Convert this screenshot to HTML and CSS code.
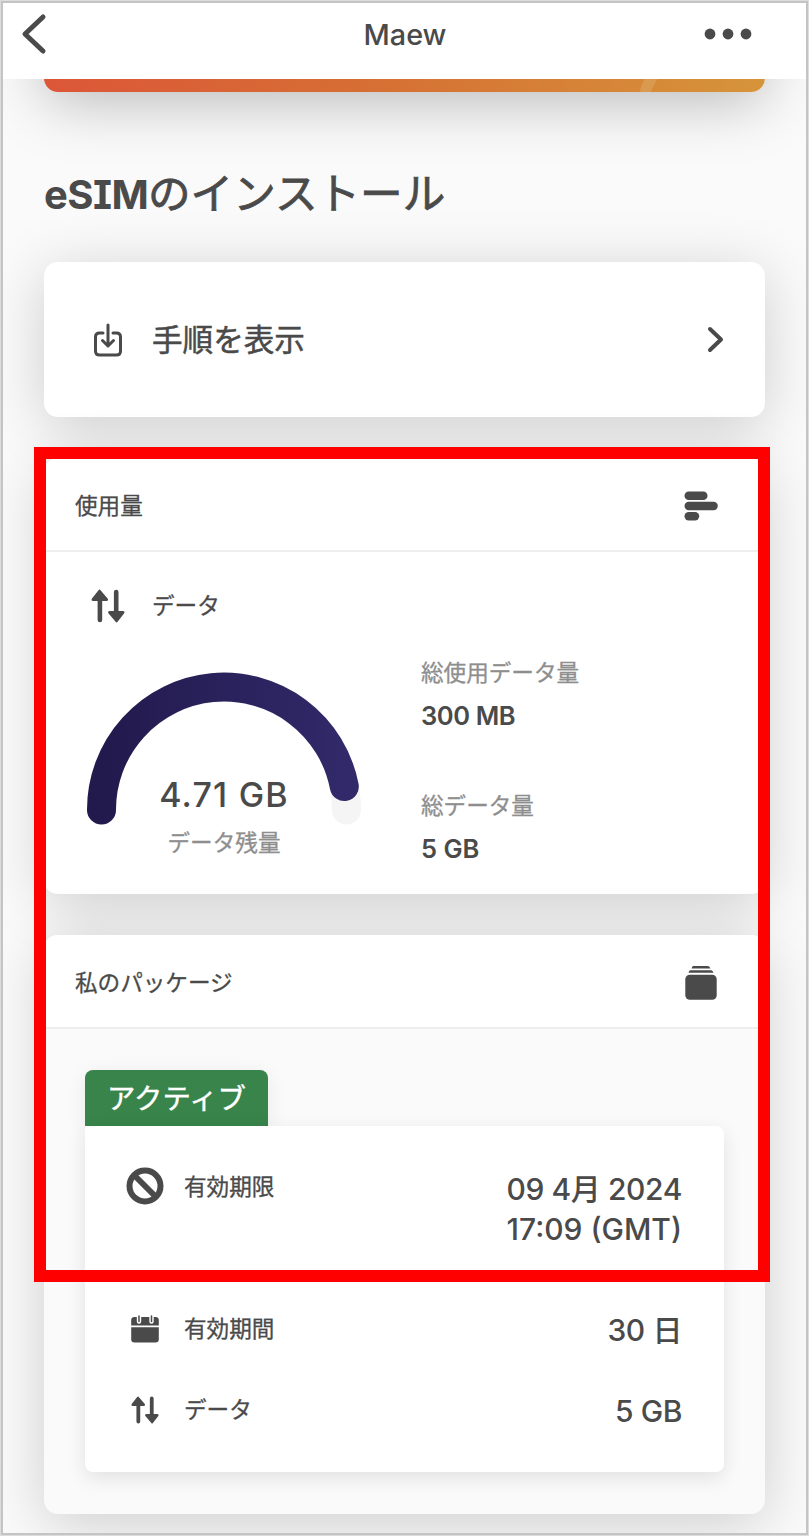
FILE: index.html
```html
<!DOCTYPE html>
<html lang="ja">
<head>
<meta charset="utf-8">
<title>Maew</title>
<link rel="stylesheet" href="styles.css">
</head>
<body>
<svg class="defs" aria-hidden="true">
  <symbol id="transfer" viewBox="0 0 34 34">
    <path class="fill" d="M8.900.5 17 10Q17.600 12 15.600 12H11.200V31a2.300 2.300 0 0 1-4.600 0V12H2Q0 12 .6 10L7.500 1.300Q8.200.4 8.900.5Z"/>
    <path class="fill" d="M25.200 33.500 17.200 24Q16.600 22 18.600 22H22.900V3a2.300 2.300 0 0 1 4.600 0V22h4.500Q34 22 33.400 24L26.600 32.700Q25.900 33.600 25.200 33.500Z"/>
  </symbol>
</svg>
<div class="screen">
  <header class="topbar">
    <svg class="back" width="28" height="44" viewBox="0 0 28 44"><path class="line" stroke-width="5" d="M23 5 5 22 23 39"/></svg>
    <h1 class="topbar-title">Maew</h1>
    <svg class="more" width="48" height="12" viewBox="0 0 48 12"><g class="fill"><circle cx="6" cy="6" r="5.400"/><circle cx="24" cy="6" r="5.400"/><circle cx="42" cy="6" r="5.400"/></g></svg>
  </header>
  <main class="content">
    <div class="sim-card"><svg width="721" height="13" viewBox="0 0 721 13"><path fill="#d99a50" d="M595.500 13Q597 6 600.500 0H613.500Q609 6 607 13Z"/></svg></div>
    <h2 class="heading"><span class="esim">eSIM</span>のインストール</h2>
    <a class="card install">
      <svg width="28" height="34" viewBox="0 0 28 34"><path class="line" stroke-width="3" d="M9 10H5.500Q1.500 10 1.500 14V28Q1.500 32 5.500 32H22.500Q26.500 32 26.500 28V14Q26.500 10 22.500 10H19M14 2V23M8.500 17.500 14 23 19.500 17.500"/></svg>
      <span class="install-label">手順を表示</span>
      <svg class="chevron" width="17" height="27" viewBox="0 0 17 27"><path class="line" stroke-width="4" d="M3 3 14 13.500 3 24"/></svg>
    </a>
    <section class="card usage">
      <div class="card-head">
        <h3 class="label">使用量</h3>
        <svg width="34" height="30" viewBox="0 0 34 30"><g class="fill"><rect x=".5" y=".6" width="23" height="8.500" rx="4.200"/><rect x=".5" y="10.800" width="33.300" height="8.500" rx="4.200"/><rect x=".5" y="21" width="14.700" height="8.500" rx="4.200"/></g></svg>
      </div>
      <div class="usage-title">
        <svg width="34" height="34"><use href="#transfer"/></svg>
        <span class="label">データ</span>
      </div>
      <div class="usage-body">
        <div class="gauge">
          <svg class="arc" width="276" height="153" viewBox="0 0 276 153">
            <defs><linearGradient id="arc-fill" x1="0" y1="0" x2="1" y2="0"><stop offset="0" stop-color="#221a4d"/><stop offset="1" stop-color="#312969"/></linearGradient></defs>
            <g fill="none" stroke-width="29" stroke-linecap="round">
              <path stroke="#f5f5f5" d="M15.500 138A122.500 122.500 0 0 1 260.500 138"/>
              <path stroke="url(#arc-fill)" d="M15.500 138A122.500 122.500 0 0 1 258.300 114.500"/>
            </g>
          </svg>
          <div class="gauge-text">
            <div class="gauge-value">4.71 GB</div>
            <div class="label muted">データ残量</div>
          </div>
        </div>
        <dl class="stats">
          <dt class="label muted">総使用データ量</dt><dd class="stat wide">300 MB</dd>
          <dt class="label muted">総データ量</dt><dd class="stat">5 GB</dd>
        </dl>
      </div>
    </section>
    <section class="card packages">
      <div class="card-head">
        <h3 class="label">私のパッケージ</h3>
        <svg class="stack" width="32" height="34" viewBox="0 0 32 34"><g class="fill"><path d="M8 0H23Q25 .5 25.500 2.500H6.500Q7 .5 8 0ZM5 4.300H26.500Q28 4.800 28.500 6.800H3.500Q4 4.800 5 4.300Z"/><rect x=".3" y="8.700" width="31.400" height="25" rx="4.500"/></g></svg>
      </div>
      <div class="packages-body">
        <div class="badge">アクティブ</div>
        <div class="package">
          <div class="row expiry">
            <svg width="38" height="38" viewBox="0 0 38 38"><path class="line" stroke-width="6" d="M9 9 29 29"/><circle class="line" stroke-width="6" cx="19" cy="19" r="15.500"/></svg>
            <span class="label">有効期限</span>
            <div class="value"><div class="date">09 4月 2024</div><div class="time">17:09 (GMT)</div></div>
          </div>
          <div class="row">
            <svg width="28" height="28" viewBox="0 0 28 28"><path class="fill" d="M3.500 2H24.500Q27.800 2 27.800 5V10.500H.2V5Q.2 2 3.500 2ZM.2 12.300H27.800V24.500Q27.800 27.500 24.500 27.500H3.500Q.2 27.500 .2 24.500Z"/><g fill="none" stroke-linecap="round"><path stroke="#fff" stroke-width="4.400" d="M8 1V6.500M20.500 1V6.500"/><path stroke="#4a4a4a" stroke-width="1.500" d="M8 1V6.500M20.500 1V6.500"/></g></svg>
            <span class="label">有効期間</span>
            <div class="value days">30 日</div>
          </div>
          <div class="row">
            <svg width="28" height="28"><use href="#transfer"/></svg>
            <span class="label">データ</span>
            <div class="value amount">5 GB</div>
          </div>
        </div>
      </div>
    </section>
  </main>
  <div class="highlight"></div>
</div>
</body>
</html>
```
FILE: styles.css
```css
* { box-sizing: border-box; }
body { margin: 0; background: #e2e2e2; color: #4a4a4a; font-family: Inter, "Noto Sans CJK JP", sans-serif; }
h1, h2, h3, dl, dd { margin: 0; font-weight: 500; }
svg { display: block; flex: none; }
.defs { position: absolute; width: 0; height: 0; }
.fill { fill: #4a4a4a; }
.line { fill: none; stroke: #4a4a4a; stroke-linecap: round; stroke-linejoin: round; }

.screen { position: relative; width: 809px; height: 1536px; overflow: hidden; background: #fafafa; border: 1px solid #dcdcdc; }
.screen::after { content: ""; position: absolute; z-index: 3; inset: 0; border: 2px solid #c4c4c4; pointer-events: none; }
.topbar { position: relative; z-index: 1; display: grid; grid-template-columns: 1fr auto 1fr; align-items: center; height: 78px; padding: 0 56px 12px 19px; background: #fff; }
.topbar-title { margin-left: 38px; white-space: nowrap; font-size: 28.800px; line-height: 40px; padding-top: 2px; }
.more { justify-self: end; }
.content { padding: 0 43px; }
.sim-card { height: 213px; margin-top: -200px; padding-top: 200px; border-radius: 14px; background: linear-gradient(90deg, #dc5638, #d66f34 45%, #d6943a); box-shadow: 0 10px 60px rgba(0, 0, 0, .26); }

.heading { display: flex; align-items: center; height: 62px; margin: 71px 0 37px; font-size: 42.600px; line-height: 62px; font-weight: 400; -webkit-text-stroke: .8px #4a4a4a; }
.esim { width: 104px; padding-top: 2px; font-weight: 700; font-size: 40px; letter-spacing: -.5px; font-feature-settings: "cv08"; -webkit-text-stroke: 0; }
.card { display: block; border-radius: 14px; background: #fff; box-shadow: 0 10px 60px rgba(0, 0, 0, .18); }
.install { display: flex; align-items: center; height: 155px; padding: 0 41px 0 50px; }
.install-label { margin-left: 30px; font-size: 30.600px; line-height: 46px; font-weight: 400; -webkit-text-stroke: .5px #4a4a4a; }
.chevron { margin-left: auto; }

.label { font-size: 22.600px; line-height: 34px; font-weight: 400; -webkit-text-stroke: .3px currentColor; }
.muted { color: #8e8e8e; }
.card-head { display: flex; align-items: center; justify-content: space-between; border-bottom: 2px solid #eee; padding: 3px 47px 0 31px; }
.usage { height: 436px; margin-top: 41px; }
.usage .card-head { height: 94px; }
.usage-title { display: flex; align-items: center; gap: 27px; height: 34px; margin: 37px 0 0 47px; }
.usage-body { display: flex; gap: 59px; padding: 50px 0 0 42px; }
.gauge { width: 276px; }
.arc { margin-top: -1px; }
.gauge-text { margin-top: -52px; text-align: center; }
.gauge-value { font-size: 34px; line-height: 44px; font-weight: 500; letter-spacing: 1.200px; white-space: nowrap; }
.gauge-text .label { margin-top: 9px; }
.stats { margin-top: -17px; }
.stat { height: 34px; margin: 9px 0 56px; font-size: 25.500px; line-height: 34px; font-weight: 600; letter-spacing: -.4px; white-space: nowrap; }
.stat:last-child { letter-spacing: 0; }

.packages { height: 579px; margin-top: 41px; background: #fafafa; }
.packages .card-head { height: 94px; padding-right: 48px; border-radius: 14px 14px 0 0; background: #fff; }
.packages-body { padding: 41px 41px 0; }
.badge { width: 183px; height: 56px; border-radius: 8px 8px 0 0; background: #38844a; box-shadow: 0 4px 20px rgba(0, 0, 0, .07); color: #fff; font-size: 28.400px; line-height: 57px; text-align: center; font-weight: 400; -webkit-text-stroke: .4px #fff; }
.package { position: relative; height: 346px; padding: 41px 42px 0 41px; border-radius: 0 8px 8px 8px; background: #fff; box-shadow: 0 6px 20px rgba(0, 0, 0, .1); }
.row { display: flex; align-items: center; height: 81px; padding-left: 5px; }
.row svg + .label { margin-left: 25px; }
.row .value { padding-top: 2px; }
.expiry { align-items: flex-start; height: 121px; padding-left: 0; }
.expiry svg + .label { margin: 3px 0 0 20px; }
.value { margin-left: auto; text-align: right; white-space: nowrap; font-size: 30px; line-height: 40px; font-weight: 500; }
.date { letter-spacing: -.4px; }
.days, .amount { letter-spacing: -.4px; }

.highlight { position: absolute; z-index: 2; left: 33px; top: 446px; width: 736px; height: 835px; border: 12.500px solid #f00; }
```
